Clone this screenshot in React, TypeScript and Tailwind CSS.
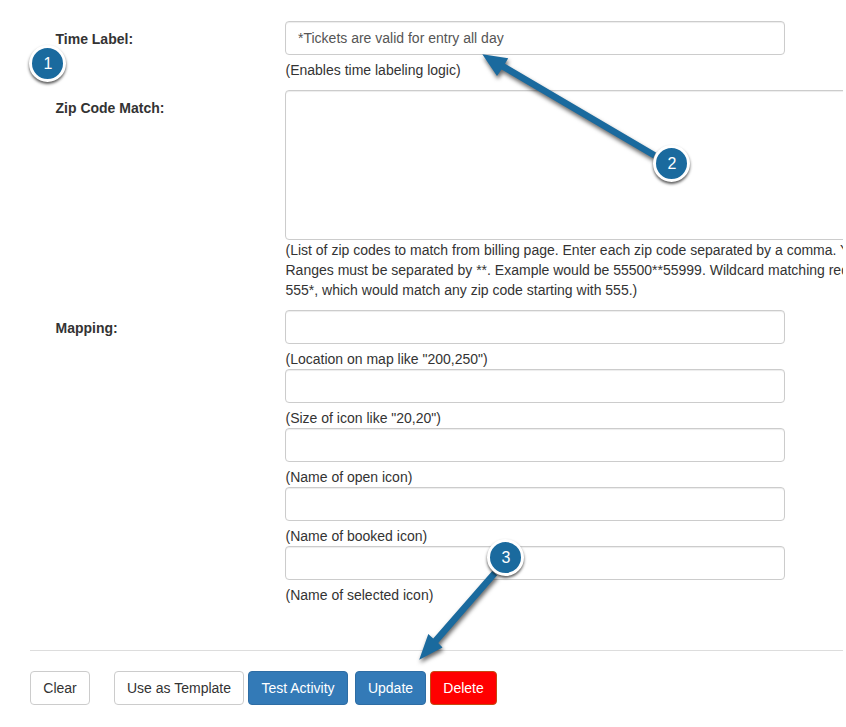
import type { ReactNode } from 'react';

const fieldClass =
  'block h-[34px] w-[500px] rounded-[4px] border border-[#cccccc] bg-white px-3 py-[6px] text-[14px] leading-5 text-[#555555] shadow-[inset_0_1px_1px_rgba(0,0,0,0.075)] outline-none';

const mappingHints = [
  '(Location on map like "200,250")',
  '(Size of icon like "20,20")',
  '(Name of open icon)',
  '(Name of booked icon)',
  '(Name of selected icon)',
];

function Row({ label, children }: { label: string; children: ReactNode }) {
  return (
    <div className="flex">
      <div className="w-[230px] shrink-0 pt-2 pl-[0.5px] font-bold">{label}</div>
      <div className="shrink-0">{children}</div>
    </div>
  );
}

function Button({ className, children }: { className: string; children: ReactNode }) {
  return (
    <button
      className={`h-[34px] shrink-0 whitespace-nowrap rounded-[4px] border text-center text-[14px] leading-5 ${className}`}
    >
      {children}
    </button>
  );
}

function Marker({ className, children }: { className: string; children: ReactNode }) {
  return (
    <div
      className={`absolute flex size-[37px] items-center justify-center rounded-full border-[3px] border-white bg-[#1a6a9e] pl-px text-[16px] leading-none text-white shadow-[0_2px_3px_rgba(0,0,0,0.65)] ${className}`}
    >
      {children}
    </div>
  );
}

export default function App() {
  return (
    <div className="relative h-[727px] w-[846px] overflow-hidden bg-white font-['Liberation_Sans',Arial,sans-serif] text-[14px] leading-5 text-[#333333]">
      <div className="w-[843px] overflow-hidden pt-[21px]">
        <div className="flex flex-col gap-[10px] pl-[55px]">
          <Row label="Time Label:">
            <input className={fieldClass} defaultValue="*Tickets are valid for entry all day" />
            <div className="h-[25px] pt-[5px] pl-[0.5px]">(Enables time labeling logic)</div>
          </Row>
          <Row label="Zip Code Match:">
            <textarea className="block h-[150px] w-[700px] resize-none rounded-[4px] border border-[#cccccc] bg-white shadow-[inset_0_1px_1px_rgba(0,0,0,0.075)] outline-none" />
            <div className="pl-[0.5px] whitespace-nowrap">
              <div>(List of zip codes to match from billing page. Enter each zip code separated by a comma. Y</div>
              <div>Ranges must be separated by **. Example would be 55500**55999. Wildcard matching req</div>
              <div>555*, which would match any zip code starting with 555.)</div>
            </div>
          </Row>
          <Row label="Mapping:">
            {mappingHints.map((hint) => (
              <div key={hint}>
                <input className={fieldClass} />
                <div className="h-[25px] pt-[5px] pl-[0.5px]">{hint}</div>
              </div>
            ))}
          </Row>
        </div>
        <hr className="mt-[45px] ml-[30px] border-t border-[#dddddd]" />
        <div className="mt-5 flex pl-[30px]">
          <Button className="w-[60px] border-[#cccccc] bg-white">Clear</Button>
          <Button className="ml-6 w-[130px] border-[#cccccc] bg-white">Use as Template</Button>
          <Button className="ml-1 w-[100px] border-[#2e6da4] bg-[#337ab7] text-white">Test Activity</Button>
          <Button className="ml-[7px] w-[71px] border-[#2e6da4] bg-[#337ab7] text-white">Update</Button>
          <Button className="ml-1 w-[67px] border-[#c44a10] bg-[#ff0000] text-white">Delete</Button>
        </div>
      </div>

      <svg
        className="pointer-events-none absolute inset-0 drop-shadow-[1px_3px_2px_rgba(0,0,0,0.6)]"
        width="846"
        height="727"
        fill="#1a6a9e"
      >
        <path d="M482.3 54.3 508.2 58.2 505 63.8 656 152.6 653 158.2 501.6 69.4 497 76Z" />
        <path d="M419.2 659.8 428.3 634 433.2 638.5 492.2 571 497.2 575.2 438.2 643 442.5 647.4Z" />
      </svg>
      <Marker className="left-[29px] top-[45px]">1</Marker>
      <Marker className="left-[653px] top-[145px]">2</Marker>
      <Marker className="left-[487px] top-[539px]">3</Marker>
    </div>
  );
}
